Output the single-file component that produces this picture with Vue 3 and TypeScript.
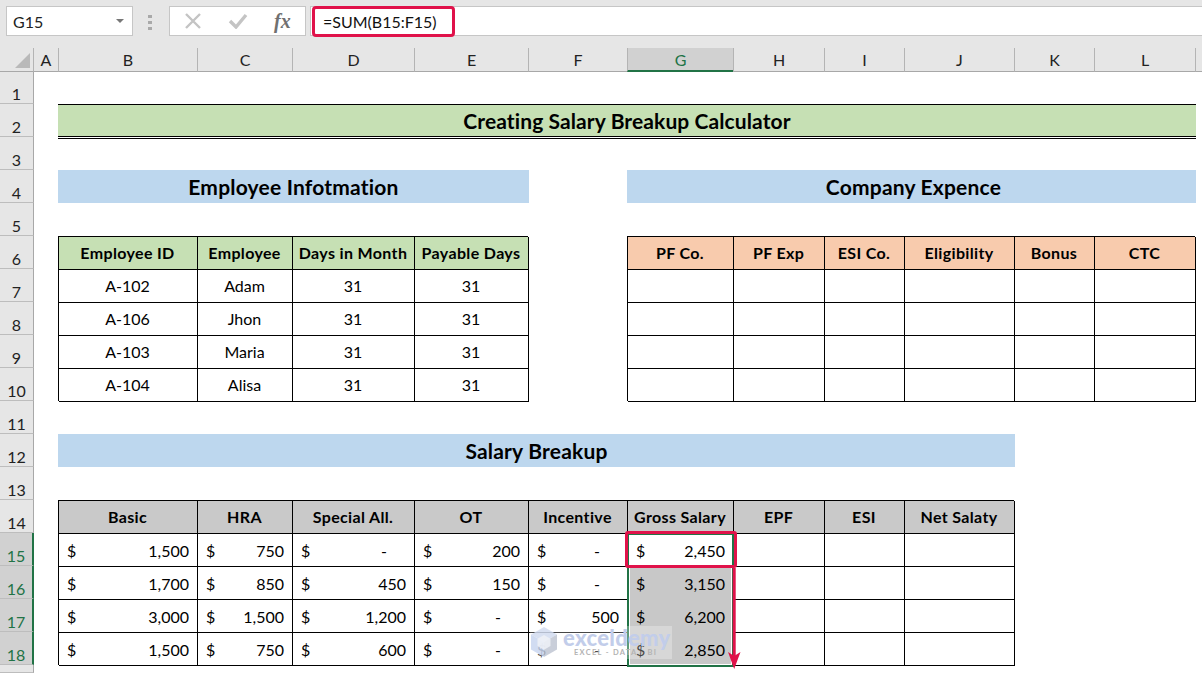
<script setup lang="ts">
interface Cell {
  col: number
  row: number
  span?: number
  cls: string
  text?: string
  amount?: string
  dash?: boolean
}

const colLetters = ['A', 'B', 'C', 'D', 'E', 'F', 'G', 'H', 'I', 'J', 'K', 'L', '']
const rows = Array.from({ length: 19 }, (_, i) => i + 1)
const selectedRows = [15, 16, 17, 18]

const cells: Cell[] = []

cells.push({ col: 3, row: 2, span: 11, cls: 'title', text: 'Creating Salary Breakup Calculator' })
cells.push({ col: 3, row: 4, span: 4, cls: 'band', text: 'Employee Infotmation' })
cells.push({ col: 8, row: 4, span: 6, cls: 'band nudge', text: 'Company Expence' })
cells.push({ col: 3, row: 12, span: 9, cls: 'band', text: 'Salary Breakup' })

const addHeaders = (start: number, row: number, labels: string[], cls: string) => {
  labels.forEach((text, i) => cells.push({ col: start + i, row, cls: `box head ${cls}`, text }))
}

addHeaders(3, 6, ['Employee ID', 'Employee', 'Days in Month', 'Payable Days'], 'green')
addHeaders(8, 6, ['PF Co.', 'PF Exp', 'ESI Co.', 'Eligibility', 'Bonus', 'CTC'], 'orange')
addHeaders(3, 14, ['Basic', 'HRA', 'Special All.', 'OT', 'Incentive', 'Gross Salary', 'EPF', 'ESI', 'Net Salaty'], 'grey')

const employees = [
  ['A-102', 'Adam', '31', '31'],
  ['A-106', 'Jhon', '31', '31'],
  ['A-103', 'Maria', '31', '31'],
  ['A-104', 'Alisa', '31', '31'],
]
employees.forEach((line, r) => {
  line.forEach((text, c) => cells.push({ col: 3 + c, row: 7 + r, cls: 'box center', text }))
  for (let c = 0; c < 6; c++) cells.push({ col: 8 + c, row: 7 + r, cls: 'box' })
})

const salary = [
  ['1,500', '750', '-', '200', '-', '2,450'],
  ['1,700', '850', '450', '150', '-', '3,150'],
  ['3,000', '1,500', '1,200', '-', '500', '6,200'],
  ['1,500', '750', '600', '-', '-', '2,850'],
]
salary.forEach((line, r) => {
  line.forEach((amount, c) => {
    const selected = c === 5 && r > 0
    cells.push({
      col: 3 + c,
      row: 15 + r,
      cls: selected ? 'money picked' : 'box money',
      amount,
      dash: amount === '-',
    })
  })
  for (let c = 0; c < 3; c++) cells.push({ col: 9 + c, row: 15 + r, cls: 'box' })
})

const placeCell = (c: Cell) => ({
  gridColumn: `${c.col} / span ${c.span ?? 1}`,
  gridRow: `${c.row + 1}`,
})
const placeRow = (r: number) => ({ gridRow: `${r + 1}` })
const placeCol = (i: number) => ({ gridColumn: `${i + 2}` })
</script>

<template>
  <div class="app">
    <header class="bar">
      <div class="name-box">
        <span>G15</span>
        <i class="caret"></i>
      </div>
      <div class="grip"><i></i><i></i><i></i></div>
      <div class="fx-box">
        <svg class="ico" width="18" height="16" viewBox="0 0 18 16">
          <path d="M2 1 L16 15 M16 1 L2 15" stroke="#c4c4c4" stroke-width="2.4" fill="none" />
        </svg>
        <svg class="ico" width="20" height="16" viewBox="0 0 20 16">
          <path d="M2 8 L8 14 L18 2" stroke="#c4c4c4" stroke-width="3.4" fill="none" />
        </svg>
        <span class="fx">fx</span>
      </div>
      <div class="formula">=SUM(B15:F15)</div>
      <div class="formula-mark"></div>
    </header>

    <section class="sheet">
      <div class="corner"><i></i></div>
      <div
        v-for="(letter, i) in colLetters"
        :key="'c' + i"
        class="col-head"
        :class="{ active: letter === 'G' }"
        :style="placeCol(i)"
      >{{ letter }}</div>
      <div
        v-for="r in rows"
        :key="'r' + r"
        class="row-head"
        :class="{ active: selectedRows.includes(r) }"
        :style="placeRow(r)"
      >{{ r < 19 ? r : '' }}</div>

      <div
        v-for="(c, i) in cells"
        :key="i"
        class="cell"
        :class="c.cls"
        :style="placeCell(c)"
      >
        <template v-if="c.amount">
          <span>$</span>
          <span :class="{ dash: c.dash }">{{ c.amount }}</span>
        </template>
        <template v-else>{{ c.text }}</template>
      </div>

      <div class="selection"></div>
      <div class="g15-mark"></div>

      <svg class="arrow" width="13" height="104" viewBox="0 0 13 104">
        <path d="M6.200 0 V92" stroke="#e0124a" stroke-width="3" fill="none" />
        <path d="M0 84 L6.200 88 L12.500 84 L6.200 101 Z" fill="#e0124a" />
      </svg>

      <div class="watermark">
        <svg width="28" height="32" viewBox="0 0 28 32">
          <path d="M14 1 L27 8.500 L14 16 L1 8.500 Z" fill="#cfd9ef" fill-opacity="0.8" />
          <path d="M1 8.500 L14 16 V31 L1 23.500 Z" fill="#c6d3ef" fill-opacity="0.8" />
          <path d="M27 8.500 L14 16 V31 L27 23.500 Z" fill="#bcc2cf" fill-opacity="0.8" />
          <path d="M14 9 L20.500 12.700 V20 L14 23.700 L7.500 20 V12.700 Z" fill="#eef1f7" fill-opacity="0.85" />
        </svg>
        <div class="wm-text">
          <div class="wm-name">exceldemy</div>
          <div class="wm-sub">EXCEL - DATA - BI</div>
        </div>
      </div>
    </section>
  </div>
</template>

<style>
html,
body {
  margin: 0;
  overflow: hidden;
  background: #fff;
}
</style>

<style scoped>
.app {
  width: 1202px;
  height: 673px;
  overflow: hidden;
  font-family: Lato, "Liberation Sans", sans-serif;
  color: #000;
  background: #fff;
}

.bar {
  position: relative;
  display: flex;
  align-items: flex-start;
  height: 48px;
  padding-top: 6px;
  box-sizing: border-box;
  background: #e6e6e6;
}

.name-box,
.fx-box,
.formula {
  height: 30px;
  box-sizing: border-box;
  background: #fff;
  border: 1px solid #c6c6c6;
  display: flex;
  align-items: center;
}

.name-box {
  width: 127px;
  margin-left: 6px;
  padding: 0 8px 0 6px;
  justify-content: space-between;
  font-size: 16px;
  color: #222;
}

.caret {
  width: 0;
  height: 0;
  border-left: 4px solid transparent;
  border-right: 4px solid transparent;
  border-top: 4px solid #777;
}

.grip {
  width: 4px;
  margin: 9px 17px 0 15px;
  display: flex;
  flex-direction: column;
  gap: 3px;
}

.grip i {
  width: 4px;
  height: 3px;
  background: #a9a9a9;
}

.fx-box {
  width: 137px;
  padding-left: 14px;
  gap: 26px;
}

.fx {
  font-family: "Liberation Serif", serif;
  font-style: italic;
  font-weight: 700;
  font-size: 20px;
  color: #707070;
}

.formula {
  flex: 1;
  margin-left: 4px;
  padding-left: 12px;
  border-right: 0;
  font-size: 16px;
  color: #111;
}

.formula-mark {
  position: absolute;
  left: 312px;
  top: 6px;
  width: 143px;
  height: 31px;
  box-sizing: border-box;
  border: 3px solid #e0124a;
  border-radius: 4px;
}

.sheet {
  position: relative;
  display: grid;
  grid-template-columns: 34px 24px 139px 95px 122px 114px 99px 106px 91px 80px 110px 80px 101px 7px;
  grid-template-rows: 24px 32px repeat(17, 33px) 8px;
  background: #fff;
}

.corner {
  grid-column: 1;
  grid-row: 1;
  position: relative;
  background: #e6e6e6;
  border-bottom: 1px solid #a8a8a8;
  border-right: 1px solid #b4b4b4;
}

.corner i {
  position: absolute;
  left: 15px;
  top: 5px;
  width: 0;
  height: 0;
  border-left: 15px solid transparent;
  border-bottom: 15px solid #b9b9b9;
}

.col-head {
  grid-row: 1;
  display: flex;
  align-items: center;
  justify-content: center;
  box-sizing: border-box;
  padding-top: 1px;
  background: #e6e6e6;
  border-bottom: 1px solid #a8a8a8;
  border-left: 1px solid #b4b4b4;
  font-size: 16px;
  line-height: 1;
  color: #222;
}

.col-head:nth-child(2) {
  border-left: 0;
}

.col-head.active {
  background: #d1d1d1;
  border-bottom: 2px solid #217346;
  color: #217346;
}

.row-head {
  grid-column: 1;
  display: flex;
  align-items: flex-end;
  justify-content: center;
  box-sizing: border-box;
  background: #e6e6e6;
  border-right: 1px solid #a8a8a8;
  border-bottom: 1px solid #bdbdbd;
  font-size: 16px;
  line-height: 19px;
  color: #222;
}

.row-head.active {
  background: #d1d1d1;
  color: #217346;
  border-right: 2px solid #217346;
}

.cell {
  display: flex;
  align-items: center;
  justify-content: center;
  box-sizing: border-box;
  font-size: 16px;
  white-space: nowrap;
}

.title {
  margin-right: -1px;
  background: #c6e0b4;
  font-size: 21px;
  font-weight: 700;
  letter-spacing: 0.1px;
  box-shadow: inset 0 1px 0 #000, inset 0 -1px 0 #000, 0 1px 0 #fff, 0 2px 0 #000;
}

.band {
  margin-right: -1px;
  background: #bdd7ee;
  font-size: 21px;
  font-weight: 700;
  letter-spacing: 0.2px;
}

.nudge {
  padding-left: 4px;
}

.box {
  box-shadow: inset 1px 1px 0 #000, 1px 1px 0 #000;
}

.head {
  font-weight: 700;
  letter-spacing: 0.35px;
}

.green {
  background: #c6e0b4;
}

.orange {
  background: #f8cbad;
}

.grey {
  background: #c9c9c9;
}

.money {
  justify-content: space-between;
  padding: 2px 8px 0 9px;
}

.picked {
  background: #c8c8c8;
}

.dash {
  margin-right: 19px;
}

.selection {
  grid-column: 8;
  grid-row: 16 / span 4;
  margin: 0 -1px -2px 0;
  box-sizing: border-box;
  border: 2px solid #217346;
  box-shadow: inset 0 0 0 1px #fff;
}

.g15-mark {
  grid-column: 8;
  grid-row: 16;
  margin: -2px -4px -2px -2px;
  box-sizing: border-box;
  border: 3px solid #e0124a;
  border-radius: 3px;
}

.arrow {
  position: absolute;
  left: 728px;
  top: 520px;
}

.watermark {
  position: absolute;
  left: 530px;
  top: 578px;
  width: 142px;
  height: 33px;
  display: flex;
  gap: 5px;
  background: rgba(255, 255, 255, 0.28);
}

.wm-text {
  line-height: 1;
}

.wm-name {
  margin-top: 1px;
  font-size: 22px;
  font-weight: 900;
  letter-spacing: 0.3px;
  color: #c2cdea;
}

.wm-sub {
  margin: 0 0 0 11px;
  font-size: 7.500px;
  font-weight: 700;
  letter-spacing: 1.300px;
  color: #b3b3b3;
}
</style>
